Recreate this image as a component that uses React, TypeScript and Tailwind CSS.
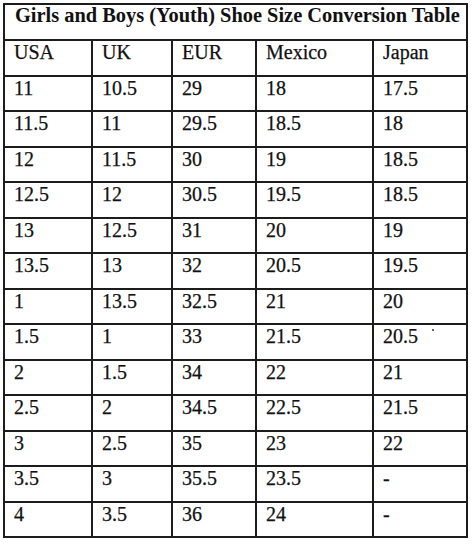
import React from "react";

const headers = ["USA", "UK", "EUR", "Mexico", "Japan"];

const rows = [
  ["11", "10.5", "29", "18", "17.5"],
  ["11.5", "11", "29.5", "18.5", "18"],
  ["12", "11.5", "30", "19", "18.5"],
  ["12.5", "12", "30.5", "19.5", "18.5"],
  ["13", "12.5", "31", "20", "19"],
  ["13.5", "13", "32", "20.5", "19.5"],
  ["1", "13.5", "32.5", "21", "20"],
  ["1.5", "1", "33", "21.5", "20.5"],
  ["2", "1.5", "34", "22", "21"],
  ["2.5", "2", "34.5", "22.5", "21.5"],
  ["3", "2.5", "35", "23", "22"],
  ["3.5", "3", "35.5", "23.5", "-"],
  ["4", "3.5", "36", "24", "-"],
];

const widths = [88, 80, 84, 117, 94];

export default function App() {
  return (
    <div
      className="w-[474px] h-[544px] bg-white pt-[3px] pl-[3px] text-[#111]"
      style={{ fontFamily: '"Liberation Serif", "Times New Roman", serif' }}
    >
      <table className="table-fixed border-collapse w-[465px]">
        <colgroup>
          {widths.map((w, i) => (
            <col key={i} style={{ width: w }} />
          ))}
        </colgroup>
        <thead>
          <tr>
            <th
              colSpan={5}
              className="h-[36px] border-2 border-[#1c1c1c] pl-[10px] pt-0 text-left align-top text-[20.4px] font-bold leading-none"
            >
              Girls and Boys (Youth) Shoe Size Conversion Table
            </th>
          </tr>
          <tr>
            {headers.map((h) => (
              <th
                key={h}
                className="h-[36px] border-2 border-[#1c1c1c] pl-[9px] pt-[1px] text-left align-top text-[20px] font-normal leading-none [-webkit-text-stroke:0.25px_#111]"
              >
                {h}
              </th>
            ))}
          </tr>
        </thead>
        <tbody>
          {rows.map((r, i) => (
            <tr key={i}>
              {r.map((c, j) => (
                <td
                  key={j}
                  className={`${i % 2 === 0 ? "h-[35px]" : "h-[36px]"} relative border-2 border-[#1c1c1c] pl-[9px] pt-[1px] text-left align-top text-[20px] leading-none [-webkit-text-stroke:0.25px_#111]`}
                >
                  {c}
                  {i === 7 && j === 4 && (
                    <span className="absolute left-[58px] top-[4px] h-[2px] w-[2px] rounded-full bg-[#333]" />
                  )}
                </td>
              ))}
            </tr>
          ))}
        </tbody>
      </table>
    </div>
  );
}
